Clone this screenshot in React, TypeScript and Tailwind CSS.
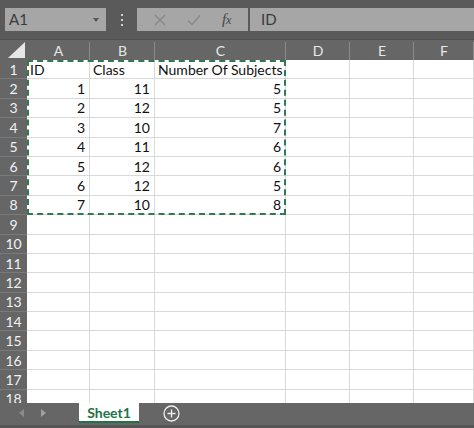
import React from 'react';

const cols = [
  { label: 'A', w: 'w-[63px]' },
  { label: 'B', w: 'w-[65px]' },
  { label: 'C', w: 'w-[131px]' },
  { label: 'D', w: 'w-[64px]' },
  { label: 'E', w: 'w-[64px]' },
  { label: 'F', w: 'w-[60px]' },
];

const data: (string | number)[][] = [
  ['ID', 'Class', 'Number Of Subjects'],
  [1, 11, 5],
  [2, 12, 5],
  [3, 10, 7],
  [4, 11, 6],
  [5, 12, 6],
  [6, 12, 5],
  [7, 10, 8],
];

const rowCount = 18;

export default function App() {
  return (
    <div className="w-[474px] h-[428px] overflow-hidden bg-[#5a5a5a] flex flex-col" style={{ fontFamily: 'Lato, "Open Sans", sans-serif' }}>
      {/* formula bar */}
      <div className="h-[40px] shrink-0 flex items-center pl-[5px] border-b border-[#4e4e4e]">
        <div className="w-[101px] h-[23px] bg-[#a6a6a6] flex items-center justify-between pl-[4px] pr-[7px] text-[15px] text-[#3a3a3a]">
          <span>A1</span>
          <svg width="6" height="4" viewBox="0 0 6 4"><path d="M0 0h6L3 4z" fill="#555" /></svg>
        </div>
        <div className="w-[31px] flex flex-col items-center gap-[3px]">
          <span className="w-[2px] h-[2px] bg-[#d0d0d0]" />
          <span className="w-[2px] h-[2px] bg-[#d0d0d0]" />
          <span className="w-[2px] h-[2px] bg-[#d0d0d0]" />
        </div>
        <div className="w-[111px] h-[23px] bg-[#a6a6a6] flex items-center justify-around px-[6px]">
          <svg width="12" height="12" viewBox="0 0 12 12"><path d="M1 1l10 10M11 1L1 11" stroke="#888" strokeWidth="1.3" /></svg>
          <svg width="14" height="12" viewBox="0 0 14 12"><path d="M1 6.5l4 4L13 1.5" stroke="#888" strokeWidth="1.3" fill="none" /></svg>
          <span className="text-[15px] italic text-[#444] leading-none" style={{ fontFamily: '"Liberation Serif", serif' }}>
            f<span className="text-[12px]">x</span>
          </span>
        </div>
        <div className="w-[2px] h-[23px] bg-[#5a5a5a]" />
        <div className="flex-1 h-[23px] bg-[#a6a6a6] flex items-center pl-[11px] text-[15px] text-[#3a3a3a]">ID</div>
      </div>

      {/* grid */}
      <div className="relative flex-1 bg-white overflow-hidden">
        {/* column header */}
        <div className="flex h-[20px] bg-[#666666]">
          <div className="w-[27px] shrink-0 flex items-end justify-end pr-[2px] pb-[2px]">
            <svg width="17" height="16" viewBox="0 0 17 16"><path d="M17 0v16H0z" fill="#e6e6e6" /></svg>
          </div>
          {cols.map((c) => (
            <div key={c.label} className={`${c.w} shrink-0 relative flex items-center justify-center text-[14px] text-[#e8e8e8]`}>
              <span className="absolute right-0 top-[2px] bottom-0 w-px bg-[#8a8a8a]" />
              {c.label}
            </div>
          ))}
        </div>

        {Array.from({ length: rowCount }).map((_, r) => (
          <div key={r} className="flex h-[19.4px]">
            <div className="w-[27px] shrink-0 bg-[#666666] border-b border-[#7a7a7a] flex items-center justify-center text-[14px] text-[#f2f2f2]">
              {r + 1}
            </div>
            {cols.map((c, ci) => {
              const v = data[r]?.[ci];
              const isNum = typeof v === 'number';
              return (
                <div
                  key={c.label}
                  className={`${c.w} shrink-0 border-r border-b border-[#d9d9d9] flex items-center pl-[3px] pr-[4px] text-[14px] text-[#111] whitespace-nowrap ${isNum ? 'justify-end' : 'justify-start'}`}
                >
                  {v}
                </div>
              );
            })}
          </div>
        ))}

        {/* copy selection marquee */}
        <div className="absolute left-[27px] top-[20px] w-[259px] h-[155px] border-2 border-dashed border-[#2f7a50] pointer-events-none" />
      </div>

      {/* sheet tabs */}
      <div className="h-[25px] shrink-0 bg-[#666666] flex items-start border-b-[3px] border-[#555555]">
        <div className="w-[79px] h-[20px] flex items-center gap-[16px] pl-[19px]">
          <svg width="6" height="8" viewBox="0 0 6 8"><path d="M5 0v8L0 4z" fill="#8a8a8a" /></svg>
          <svg width="6" height="8" viewBox="0 0 6 8"><path d="M0 0v8l5-4z" fill="#a0a0a0" /></svg>
        </div>
        <div className="w-[60px] h-[20px] bg-white border-b-2 border-[#217346] flex items-center justify-center text-[14px] font-bold text-[#217346]">
          Sheet1
        </div>
        <div className="ml-[24px] h-[20px] flex items-center">
          <svg width="17" height="17" viewBox="0 0 17 17">
            <circle cx="8.5" cy="8.5" r="7.5" stroke="#f0f0f0" strokeWidth="1.3" fill="none" />
            <path d="M8.5 4.5v8M4.5 8.5h8" stroke="#f0f0f0" strokeWidth="1.3" />
          </svg>
        </div>
      </div>
    </div>
  );
}
